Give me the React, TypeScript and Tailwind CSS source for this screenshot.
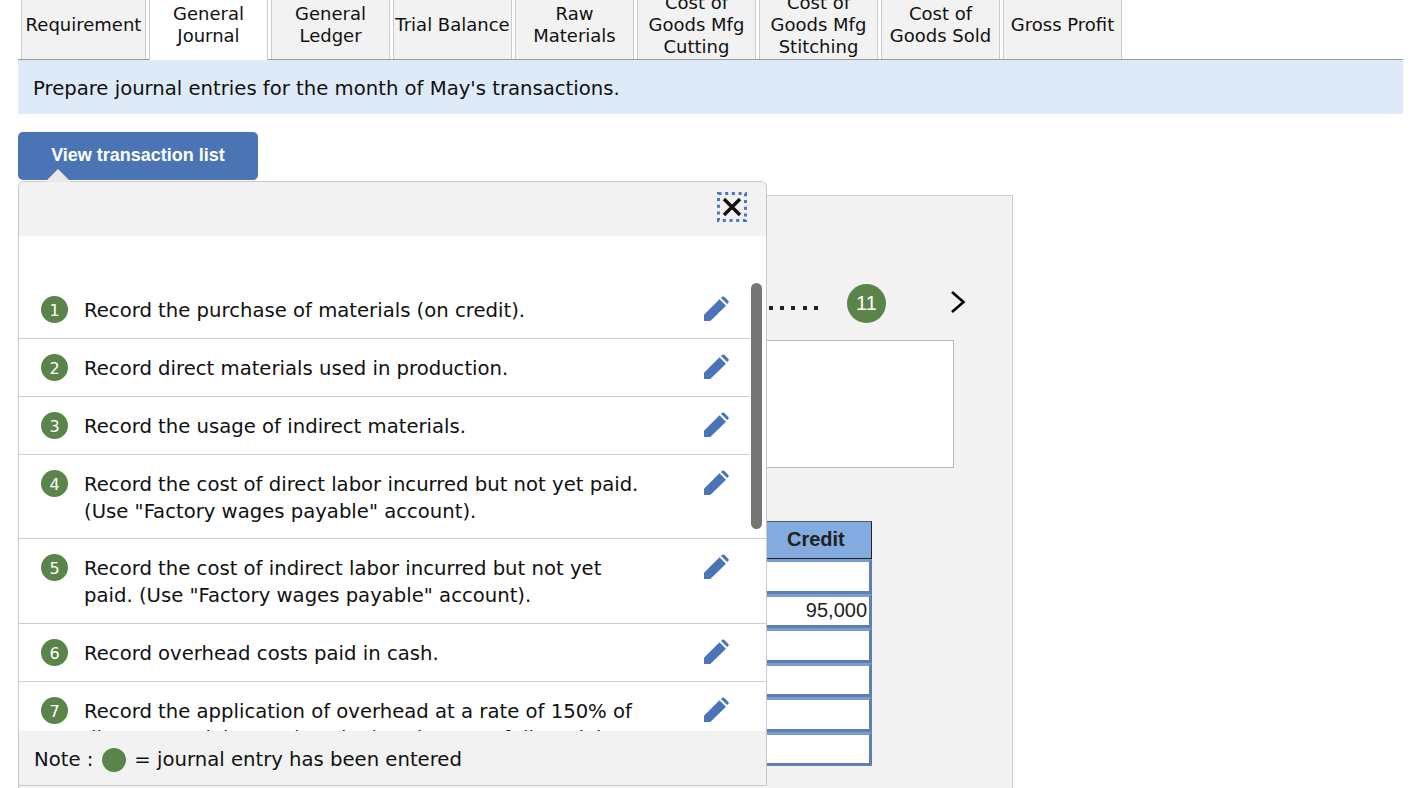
// App.tsx
const font = { tab: "font-['DejaVu_Sans',sans-serif]", arial: "font-['Liberation_Sans',sans-serif]" };

const tabs = [
  { label: ['Requirement'], w: 'w-[125px]' },
  { label: ['General', 'Journal'], w: 'w-[119px]', active: true },
  { label: ['General', 'Ledger'], w: 'w-[119px]' },
  { label: ['Trial Balance'], w: 'w-[119px]' },
  { label: ['Raw', 'Materials'], w: 'w-[119px]' },
  { label: ['Cost of', 'Goods Mfg', 'Cutting'], w: 'w-[119px]' },
  { label: ['Cost of', 'Goods Mfg', 'Stitching'], w: 'w-[119px]' },
  { label: ['Cost of', 'Goods Sold'], w: 'w-[119px]' },
  { label: ['Gross Profit'], w: 'w-[119px]' },
];

const entries = [
  { n: 1, lines: ['Record the purchase of materials (on credit).'], pad: 'h-[58px]' },
  { n: 2, lines: ['Record direct materials used in production.'], pad: 'h-[58px]' },
  { n: 3, lines: ['Record the usage of indirect materials.'], pad: 'h-[58px]' },
  { n: 4, lines: ['Record the cost of direct labor incurred but not yet paid.', '(Use "Factory wages payable" account).'], pad: 'h-[84px]' },
  { n: 5, lines: ['Record the cost of indirect labor incurred but not yet', 'paid. (Use "Factory wages payable" account).'], pad: 'h-[85px]' },
  { n: 6, lines: ['Record overhead costs paid in cash.'], pad: 'h-[58px]' },
  { n: 7, lines: ['Record the application of overhead at a rate of 150% of', 'direct materials cost (Cutting) and 120% of direct labor'], pad: 'h-[84px]' },
];

function Pencil() {
  return (
    <svg width="25" height="25" viewBox="0 0 25 25" className="shrink-0 fill-[#4a74b8]">
      <path d="M0 18.8 L15.5 3.3 L22 9.8 L6.3 25 L0 25 Z" />
      <path d="M17 2 L18.2 .8 Q19.2 0 20.2 .8 L24.4 5 Q25.1 5.9 24.4 6.8 L23.2 8.1 Z" />
    </svg>
  );
}

function CloseButton() {
  return (
    <svg width="30" height="30" viewBox="0 0 30 30">
      <rect x="1.5" y="1.5" width="27" height="27" fill="none" stroke="#4a74c4" strokeWidth="3" strokeDasharray="3 3.7" />
      <path d="M7 7 L23 23 M23 7 L7 23" stroke="#111" strokeWidth="3.4" />
    </svg>
  );
}

function Dots() {
  return (
    <div className="flex gap-[7.3px] mt-[8px]">
      {[0, 1, 2, 3, 4].map((i) => (
        <span key={i} className="block w-[4px] h-[4px] bg-[#222]" />
      ))}
    </div>
  );
}

function CreditCell({ value }: { value?: string }) {
  return (
    <div className={`h-[34.5px] border-[3px] border-[#7b9ccf] border-r-[#5d7fb8] border-b-[#5d7fb8] bg-white flex items-center justify-end pr-[2px] pb-[1px] text-[20px] text-[#222] ${font.arial}`}>
      {value}
    </div>
  );
}

export default function App() {
  return (
    <div className={`relative h-[788px] overflow-hidden bg-white text-[#111] ${font.tab}`}>
      <div className="pl-[18px] w-[1403px]">
        {/* tabs, the top ones run off the page */}
        <div className="-mt-[11px] h-[71px] border-b border-[#999] flex gap-[3px] pl-[3px]">
          {tabs.map((t) => (
            <div
              key={t.label.join(' ')}
              className={`${t.w} h-[70px] border border-[#ccc] border-b-0 flex flex-col items-center justify-center text-[18px] leading-[22px] ${t.active ? 'bg-white h-[71px]' : 'bg-[#f2f2f2]'}`}
            >
              {t.label.map((l) => (
                <span key={l} className="whitespace-nowrap">{l}</span>
              ))}
            </div>
          ))}
        </div>

        <div className="h-[54px] bg-[#deeaf8] flex items-center pl-[15px] pt-[4px] text-[19.65px]">
          Prepare journal entries for the month of May's transactions.
        </div>

        <button className={`mt-[18px] block w-[240px] h-[48px] rounded-[5px] bg-[#4a74b4] text-white text-[18px] font-bold pb-[2px] ${font.arial}`}>
          View transaction list
        </button>

        {/* panel behind the popover */}
        <div className="mt-[15px] w-[995px] h-[700px] border border-[#ccc] bg-[#f2f2f2] flex flex-col items-end">
          <div className="mt-[88px] mr-[46px] flex items-center">
            <Dots />
            <div className={`ml-[29px] w-[39px] h-[39px] rounded-full bg-[#5a8449] text-white flex items-center justify-center text-[20px] pb-[2px] ${font.arial}`}>
              11
            </div>
            <svg width="16" height="24" viewBox="0 0 16 24" className="ml-[64px] -mt-[3px]">
              <path d="M2 2 L13.5 12 L2 22" fill="none" stroke="#000" strokeWidth="2.6" />
            </svg>
          </div>
          <div className="mt-[17px] mr-[58px] w-[800px] h-[128px] border border-[#bbb] bg-white" />
          <div className="mt-[53px] mr-[140px] w-[300px]">
            <div className={`h-[38px] bg-[#84abe0] border-t border-t-[#555] border-r border-b border-r-[#222] border-b-[#222] pl-[215px] pb-[2px] flex items-center text-[20px] font-bold text-[#222] whitespace-nowrap ${font.arial}`}>
              Credit
            </div>
            <CreditCell />
            <CreditCell value="95,000" />
            <CreditCell />
            <CreditCell />
            <CreditCell />
            <CreditCell />
          </div>
        </div>
      </div>

      {/* popover over the page */}
      <div className="absolute left-[18px] top-[181px] w-[749px] h-[605px] rounded-t-[6px] border-t border-l border-r border-[#c8c8c8] bg-white flex flex-col overflow-hidden">
        <div className="h-[54px] shrink-0 bg-[#f2f2f2] flex items-start justify-end pt-[10px] pr-[19px]">
          <CloseButton />
        </div>
        <div className="relative flex-1 overflow-hidden pt-[45px]">
          {entries.map((e) => (
            <div key={e.n} className={`${e.pad} shrink-0 border-b border-[#ccc] pt-[15px] pl-[22px] flex text-[19.65px] leading-[27px]`}>
              <div className="w-[27px] h-[27px] rounded-full bg-[#5a8449] text-white text-[16px] pt-[1px] flex items-center justify-center shrink-0">
                {e.n}
              </div>
              <div className="ml-[16px] mt-[1px] w-[580px] whitespace-nowrap">
                {e.lines.map((l) => (
                  <div key={l}>{l}</div>
                ))}
              </div>
              <div className="ml-[40px]"><Pencil /></div>
            </div>
          ))}
          {/* overlay scrollbar */}
          <div className="absolute right-0 top-[45px] w-[16px] h-[250px] bg-white py-[2px] pl-[1px]">
            <div className="w-[11px] h-full rounded-full bg-[#757575]" />
          </div>
        </div>
        <div className="h-[55px] shrink-0 bg-[#f2f2f2] border-b border-[#ccc] flex items-center pl-[15px] pt-[3px] text-[19.65px]">
          <span>Note :</span>
          <span className="ml-[9px] w-[24px] h-[24px] rounded-full bg-[#5a8449]" />
          <span className="ml-[8px]">= journal entry has been entered</span>
        </div>
      </div>

      {/* little arrow from the button to the popover */}
      <svg width="26" height="13" viewBox="0 0 26 13" className="absolute left-[45px] top-[169px]">
        <path d="M0 13 L13 0 L26 13 Z" fill="#e9e9e9" />
      </svg>
    </div>
  );
}
